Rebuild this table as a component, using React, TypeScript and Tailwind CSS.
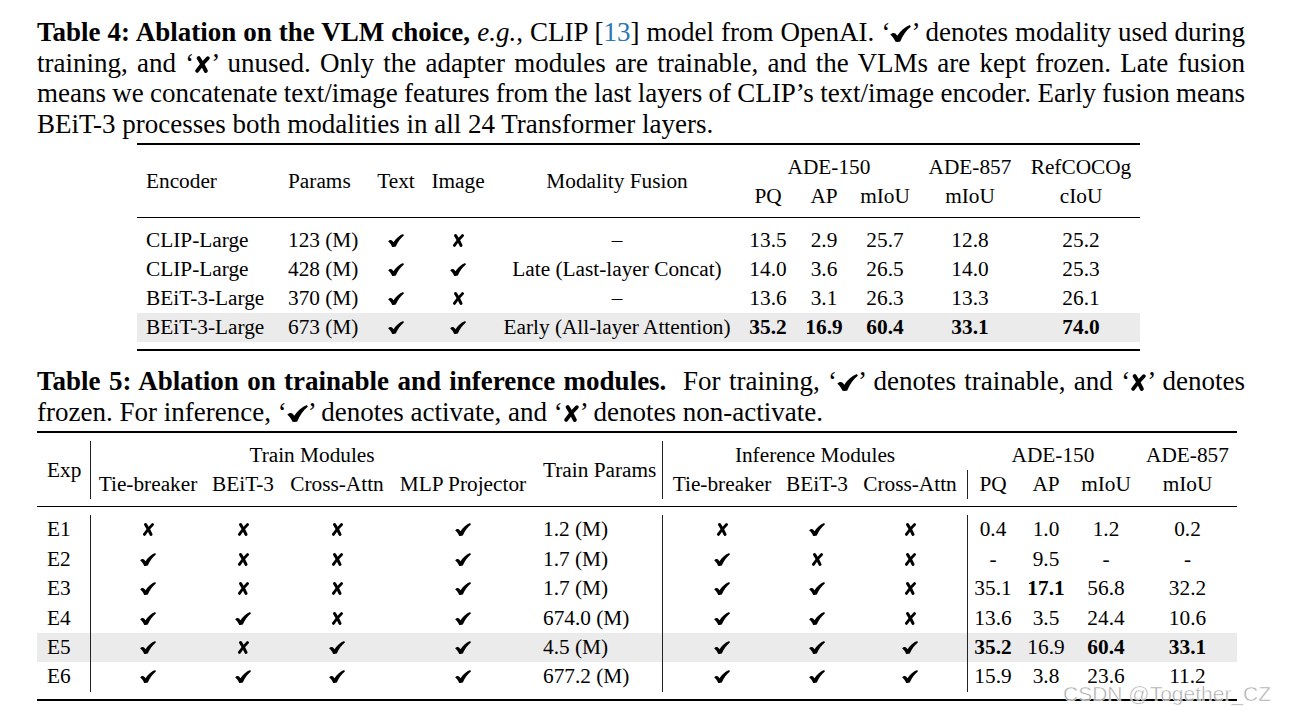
import React from 'react'

const Check = ({ className = 'h-[13px] w-[16px]' }: { className?: string }) => (
  <svg viewBox="0 0 16 13" className={className}>
    <path
      d="M0.2,7.4 C1.4,6 3.2,5.6 4.3,6.7 L5.5,8.2 C8,4.4 11.4,1.3 15.2,0 L15.9,1.4 C12.6,4 9.8,7.9 7.8,12.6 C7,12.95 5.3,13 4.2,12.9 C3.2,10.6 1.8,8.6 0.2,7.4 Z"
      fill="currentColor"
    />
  </svg>
)

const Cross = ({ className = 'h-[13px] w-[13px]' }: { className?: string }) => (
  <svg viewBox="0 0 13 13" className={className}>
    <path d="M3.6,1.6 Q6.8,6.4 9,11.4" stroke="currentColor" strokeWidth="3" strokeLinecap="round" fill="none" />
    <path d="M10.6,1.6 Q6.4,5.6 2.4,11.4" stroke="currentColor" strokeWidth="2.8" strokeLinecap="round" fill="none" />
  </svg>
)

const Mark = ({ v }: { v: boolean }) => (
  <div className="flex items-center justify-center">{v ? <Check /> : <Cross />}</div>
)

const CapCheck = () => (
  <span className="inline-block align-[-1px]">
    <Check className="h-[17px] w-[21px]" />
  </span>
)
const CapCross = () => (
  <span className="inline-block align-[-1px]">
    <Cross className="h-[17px] w-[17px]" />
  </span>
)

type Row4 = { enc: string; params: string; text: boolean; image: boolean; fusion: string; vals: string[]; best?: boolean }

const rows4: Row4[] = [
  { enc: 'CLIP-Large', params: '123 (M)', text: true, image: false, fusion: '–', vals: ['13.5', '2.9', '25.7', '12.8', '25.2'] },
  { enc: 'CLIP-Large', params: '428 (M)', text: true, image: true, fusion: 'Late (Last-layer Concat)', vals: ['14.0', '3.6', '26.5', '14.0', '25.3'] },
  { enc: 'BEiT-3-Large', params: '370 (M)', text: true, image: false, fusion: '–', vals: ['13.6', '3.1', '26.3', '13.3', '26.1'] },
  { enc: 'BEiT-3-Large', params: '673 (M)', text: true, image: true, fusion: 'Early (All-layer Attention)', vals: ['35.2', '16.9', '60.4', '33.1', '74.0'], best: true },
]

type Row5 = { exp: string; train: boolean[]; params: string; infer: boolean[]; vals: string[]; bold: boolean[]; hl?: boolean }

const rows5: Row5[] = [
  { exp: 'E1', train: [false, false, false, true], params: '1.2 (M)', infer: [false, true, false], vals: ['0.4', '1.0', '1.2', '0.2'], bold: [false, false, false, false] },
  { exp: 'E2', train: [true, false, false, true], params: '1.7 (M)', infer: [true, false, false], vals: ['-', '9.5', '-', '-'], bold: [false, false, false, false] },
  { exp: 'E3', train: [true, false, false, true], params: '1.7 (M)', infer: [true, true, false], vals: ['35.1', '17.1', '56.8', '32.2'], bold: [false, true, false, false] },
  { exp: 'E4', train: [true, true, false, true], params: '674.0 (M)', infer: [true, true, false], vals: ['13.6', '3.5', '24.4', '10.6'], bold: [false, false, false, false] },
  { exp: 'E5', train: [true, false, true, true], params: '4.5 (M)', infer: [true, true, true], vals: ['35.2', '16.9', '60.4', '33.1'], bold: [true, false, true, true], hl: true },
  { exp: 'E6', train: [true, true, true, true], params: '677.2 (M)', infer: [true, true, true], vals: ['15.9', '3.8', '23.6', '11.2'], bold: [false, false, false, false] },
]

function Table4() {
  return (
    <div className="ml-[100px] mt-[3px] w-[1003px] text-[21.3px]">
      <div className="h-[2px] bg-black" />
      <div className="grid grid-cols-[143px_90px_52px_72px_246px_56px_56px_66px_104px_118px] grid-rows-[29px_29px] pt-[8px] pb-[6px] leading-[29px]">
        <div className="col-start-1 row-start-1 row-span-2 flex items-center pl-[9px]">Encoder</div>
        <div className="col-start-2 row-start-1 row-span-2 flex items-center pl-[8px]">Params</div>
        <div className="col-start-3 row-start-1 row-span-2 flex items-center justify-center">Text</div>
        <div className="col-start-4 row-start-1 row-span-2 flex items-center justify-center">Image</div>
        <div className="col-start-5 row-start-1 row-span-2 flex items-center justify-center">Modality Fusion</div>
        <div className="col-start-6 col-span-3 row-start-1 text-center">ADE-150</div>
        <div className="col-start-9 row-start-1 text-center">ADE-857</div>
        <div className="col-start-10 row-start-1 text-center">RefCOCOg</div>
        <div className="col-start-6 row-start-2 text-center">PQ</div>
        <div className="col-start-7 row-start-2 text-center">AP</div>
        <div className="col-start-8 row-start-2 text-center">mIoU</div>
        <div className="col-start-9 row-start-2 text-center">mIoU</div>
        <div className="col-start-10 row-start-2 text-center">cIoU</div>
      </div>
      <div className="h-px bg-black" />
      <div className="pt-[8.5px] pb-[6.5px]">
        {rows4.map((r, i) => (
          <div
            key={i}
            className={`grid h-[29px] grid-cols-[143px_90px_52px_72px_246px_56px_56px_66px_104px_118px] items-center leading-[29px] ${r.best ? 'bg-[#ebebeb]' : ''}`}
          >
            <div className="pl-[9px]">{r.enc}</div>
            <div className="pl-[8px]">{r.params}</div>
            <Mark v={r.text} />
            <Mark v={r.image} />
            <div className="whitespace-nowrap text-center">{r.fusion}</div>
            {r.vals.map((v, j) => (
              <div key={j} className={`text-center ${r.best ? 'font-bold' : ''}`}>
                {v}
              </div>
            ))}
          </div>
        ))}
      </div>
      <div className="h-[2px] bg-black" />
    </div>
  )
}

function Table5() {
  return (
    <div className="mt-[3px] w-[1200px] text-[21.3px]">
      <div className="h-[2px] bg-black" />
      <div className="grid grid-cols-[53px_1px_114px_76px_112px_140px_129px_1px_118px_72px_114px_1px_50px_56px_64px_99px] grid-rows-[29px_29px] pt-[8.5px] pb-[6.5px] leading-[29px]">
        <div className="col-start-1 row-start-1 row-span-2 flex items-center pl-[10px]">Exp</div>
        <div className="col-start-2 row-start-1 row-span-2 bg-[#222]" />
        <div className="col-start-3 col-span-4 row-start-1 text-center">Train Modules</div>
        <div className="col-start-7 row-start-1 row-span-2 flex items-center pl-[10px]">Train Params</div>
        <div className="col-start-8 row-start-1 row-span-2 bg-[#222]" />
        <div className="col-start-9 col-span-3 row-start-1 text-center">Inference Modules</div>
        <div className="col-start-13 col-span-3 row-start-1 text-center">ADE-150</div>
        <div className="col-start-16 row-start-1 text-center">ADE-857</div>
        <div className="col-start-3 row-start-2 text-center">Tie-breaker</div>
        <div className="col-start-4 row-start-2 text-center">BEiT-3</div>
        <div className="col-start-5 row-start-2 text-center">Cross-Attn</div>
        <div className="col-start-6 row-start-2 text-center">MLP Projector</div>
        <div className="col-start-9 row-start-2 text-center">Tie-breaker</div>
        <div className="col-start-10 row-start-2 text-center">BEiT-3</div>
        <div className="col-start-11 row-start-2 text-center">Cross-Attn</div>
        <div className="col-start-12 row-start-2 bg-[#222]" />
        <div className="col-start-13 row-start-2 text-center">PQ</div>
        <div className="col-start-14 row-start-2 text-center">AP</div>
        <div className="col-start-15 row-start-2 text-center">mIoU</div>
        <div className="col-start-16 row-start-2 text-center">mIoU</div>
      </div>
      <div className="h-px bg-black" />
      <div className="pt-[8.5px] pb-[7.5px]">
        {rows5.map((r) => (
          <div
            key={r.exp}
            className={`grid h-[29.4px] grid-cols-[53px_1px_114px_76px_112px_140px_129px_1px_118px_72px_114px_1px_50px_56px_64px_99px] leading-[29px] ${r.hl ? 'bg-[#ebebeb]' : ''}`}
          >
            <div className="flex items-center pl-[10px]">{r.exp}</div>
            <div className="bg-[#222]" />
            {r.train.map((t, j) => (
              <Mark key={j} v={t} />
            ))}
            <div className="flex items-center pl-[10px]">{r.params}</div>
            <div className="bg-[#222]" />
            {r.infer.map((t, j) => (
              <Mark key={j} v={t} />
            ))}
            <div className="bg-[#222]" />
            {r.vals.map((v, j) => (
              <div key={j} className={`flex items-center justify-center ${r.bold[j] ? 'font-bold' : ''}`}>
                {v}
              </div>
            ))}
          </div>
        ))}
      </div>
      <div className="h-[2px] bg-black" />
    </div>
  )
}

export default function App() {
  const line = 'text-justify [text-align-last:justify] [word-spacing:-3px]'
  return (
    <div className="relative h-[718px] w-[1290px] overflow-hidden bg-white font-['Liberation_Serif',serif] text-black">
      <div className="px-[37px] pt-[17px]">
        <div className="w-[1208px] text-[27px] leading-[30.7px]">
          <div className={line}>
            <b>Table 4: Ablation on the VLM choice,</b> <i>e.g.</i>, CLIP [<span className="text-[#2b78b5]">13</span>] model from OpenAI. ‘<CapCheck />’ denotes modality used during
          </div>
          <div className={line}>
            training, and ‘<CapCross />’ unused. Only the adapter modules are trainable, and the VLMs are kept frozen. Late fusion
          </div>
          <div className={line}>
            means we concatenate text/image features from the last layers of CLIP’s text/image encoder. Early fusion means
          </div>
          <div>BEiT-3 processes both modalities in all 24 Transformer layers.</div>
        </div>

        <Table4 />

        <div className="mt-[15.5px] w-[1208px] text-[27px] leading-[30.7px]">
          <div className={line}>
            <b>Table 5: Ablation on trainable and inference modules.</b>&nbsp; For training, ‘<CapCheck />’ denotes trainable, and ‘<CapCross />’ denotes
          </div>
          <div>
            frozen. For inference, ‘<CapCheck />’ denotes activate, and ‘<CapCross />’ denotes non-activate.
          </div>
        </div>

        <Table5 />
      </div>

      <div className="absolute left-[1063px] top-[681px] font-['Liberation_Sans',sans-serif] text-[21px] leading-[26px] text-[#9a9a9a]/85 [-webkit-text-stroke:0.5px_#ffffff]">
        CSDN @Together_CZ
      </div>
    </div>
  )
}
